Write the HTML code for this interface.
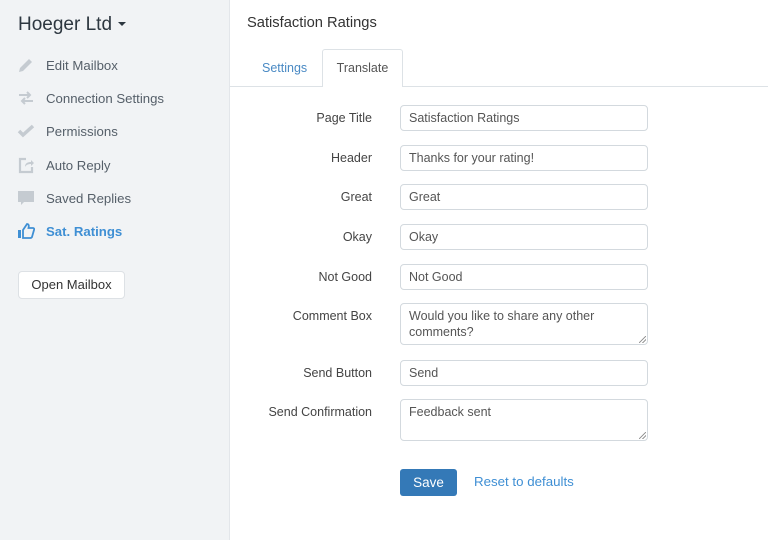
<!DOCTYPE html>
<html><head><meta charset="utf-8"><style>
*{box-sizing:border-box;margin:0;padding:0}
body{width:768px;height:540px;overflow:hidden;font-family:"Liberation Sans",sans-serif;background:#fff;position:relative;color:#333}
.side{position:absolute;left:0;top:0;width:230px;height:540px;background:#f1f3f5;border-right:1px solid #e3e6ea}
.brand{position:absolute;left:18px;top:14px;font-size:19px;color:#2d3740}
.caret{display:inline-block;width:0;height:0;border-left:4px solid transparent;border-right:4px solid transparent;border-top:4px solid #2d3740;vertical-align:middle;margin-left:6px;margin-top:-2px}
.nav{position:absolute;left:46px;font-size:13.2px;color:#555f69}
.nav.act{color:#3f8fd4;font-weight:bold}
.ic{position:absolute;left:17px;width:18px;height:18px}
.obtn{position:absolute;left:18px;top:271px;width:107px;height:28px;border:1px solid #dde1e5;border-radius:4px;background:#fff;font-size:13px;color:#333;text-align:center;line-height:26px}
.title{position:absolute;left:247px;top:15px;font-size:14.7px;color:#333}
.tabline{position:absolute;left:230px;right:0;top:86px;border-top:1px solid #dde2e6}
.tab1{position:absolute;left:262px;top:61px;font-size:12.5px;color:#4a8ac4}
.tab2{position:absolute;left:322px;top:49px;width:81px;height:38px;border:1px solid #dde2e6;border-bottom:none;border-radius:3px 3px 0 0;background:#fff;font-size:12.5px;color:#555;text-align:center;line-height:36px}
.lbl{position:absolute;right:396px;font-size:12.5px;color:#444;text-align:right}
.in{position:absolute;left:400px;width:248px;height:26px;border:1px solid #d3d9de;border-radius:4px;font-size:12.5px;color:#555;padding:0 8px;line-height:24px}
.ta{height:42px;line-height:16px;padding-top:4px}
.ta:after{content:"";position:absolute;right:1px;bottom:1px;width:7px;height:7px;background:linear-gradient(135deg,transparent 45%,#999 45%,#999 55%,transparent 55%,transparent 70%,#999 70%,#999 80%,transparent 80%)}
.save{position:absolute;left:400px;top:469px;width:57px;height:27px;background:#3479b7;border-radius:3px;color:#fff;font-size:13.5px;text-align:center;line-height:27px}
.reset{position:absolute;left:474px;top:474px;font-size:13.3px;color:#3f8fd4}
</style></head><body>
<div class="side">
<div class="brand">Hoeger Ltd<span class="caret"></span></div>
<svg class="ic" style="top:56px" viewBox="0 0 18 18"><path d="M2 16l1-4 9-9 3 3-9 9z" fill="#c5cbd1"/></svg>
<div class="nav" style="top:58px">Edit Mailbox</div>
<svg class="ic" style="top:89px" viewBox="0 0 18 18"><path d="M2 6h11M10 3l3 3-3 3M16 12H5M8 9l-3 3 3 3" stroke="#c5cbd1" stroke-width="2" fill="none"/></svg>
<div class="nav" style="top:91px">Connection Settings</div>
<svg class="ic" style="top:122px" viewBox="0 0 18 18"><path d="M2 9l4 4 10-9" stroke="#c5cbd1" stroke-width="3.5" fill="none"/></svg>
<div class="nav" style="top:124px">Permissions</div>
<svg class="ic" style="top:156px" viewBox="0 0 18 18"><path d="M9 3H3v13h12v-5" stroke="#c5cbd1" stroke-width="2.2" fill="none"/><path d="M8 11c0-4 3-5 6-5V4l3 3-3 3V8c-3 0-5 1-6 3z" fill="#c5cbd1"/></svg>
<div class="nav" style="top:158px">Auto Reply</div>
<svg class="ic" style="top:189px" viewBox="0 0 18 18"><path d="M1 2h16v11H7l-3 3v-3H1z" fill="#c5cbd1"/></svg>
<div class="nav" style="top:191px">Saved Replies</div>
<svg class="ic" style="top:222px" viewBox="0 0 18 18"><rect x="1" y="8" width="3" height="8" fill="#3f8fd4"/><path d="M6 8l4-6c2 0 2 2 1.5 4H16c1 0 1.5 1 1 2l-2 7c-.3.7-1 1-2 1H6z" stroke="#3f8fd4" stroke-width="1.8" fill="none"/></svg>
<div class="nav act" style="top:224px">Sat. Ratings</div>
<div class="obtn">Open Mailbox</div>
</div>
<div class="title">Satisfaction Ratings</div>
<div class="tabline"></div>
<div class="tab1">Settings</div>
<div class="tab2">Translate</div>

<div class="lbl" style="top:111px">Page Title</div><div class="in" style="top:105px">Satisfaction Ratings</div>
<div class="lbl" style="top:151px">Header</div><div class="in" style="top:145px">Thanks for your rating!</div>
<div class="lbl" style="top:190px">Great</div><div class="in" style="top:184px">Great</div>
<div class="lbl" style="top:230px">Okay</div><div class="in" style="top:224px">Okay</div>
<div class="lbl" style="top:270px">Not Good</div><div class="in" style="top:264px">Not Good</div>
<div class="lbl" style="top:309px">Comment Box</div><div class="in ta" style="top:303px">Would you like to share any other comments?</div>
<div class="lbl" style="top:366px">Send Button</div><div class="in" style="top:360px">Send</div>
<div class="lbl" style="top:405px">Send Confirmation</div><div class="in ta" style="top:399px">Feedback sent</div>
<div class="save">Save</div>
<div class="reset">Reset to defaults</div>
</body></html>
